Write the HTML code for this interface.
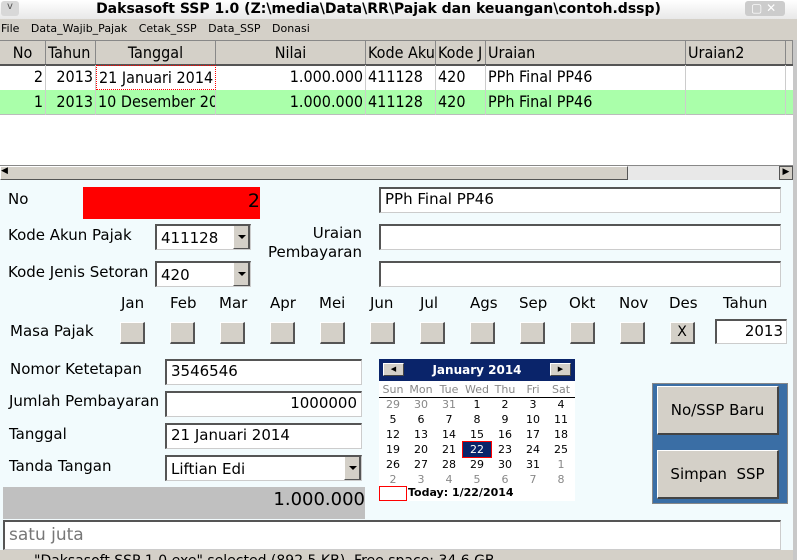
<!DOCTYPE html>
<html><head><style>
*{margin:0;padding:0;box-sizing:border-box}
body{width:797px;height:560px;overflow:hidden;background:#d4d0c8;font-family:"DejaVu Sans","Liberation Sans",sans-serif;position:relative}
.a{position:absolute}
.t{font-size:14px;color:#000;white-space:nowrap}
.inp{position:absolute;background:#fff;border-top:2px solid #555;border-left:2px solid #555;border-right:1px solid #ccc;border-bottom:1px solid #ccc;font-size:15px;padding-left:4px;line-height:20px;white-space:nowrap}
.mb{position:absolute;width:25px;height:22px;background:#d4d0c8;border-top:1px solid #fff;border-left:1px solid #fff;border-right:2px solid #555;border-bottom:2px solid #555;font-size:14px;text-align:center;line-height:19px}
.dd{position:absolute;right:0;top:0;width:17px;height:100%;background:#d4d0c8;border-left:1px solid #fff;border-right:2px solid #555;border-bottom:1px solid #555}
.dd:after{content:"";position:absolute;left:4px;top:9px;border:4px solid transparent;border-top:4px solid #000;border-bottom:0}
.gh{position:absolute;top:41px;height:24px;border-right:1px solid #888;font-size:16px;line-height:24px;background:#d4d0c8;white-space:nowrap;overflow:hidden;padding:0 2px;font-family:"DejaVu Sans Condensed","DejaVu Sans",sans-serif}
.gc{position:absolute;height:25px;border-right:1px solid #ccc;font-size:16px;line-height:24px;white-space:nowrap;overflow:hidden;padding:0 2px;font-family:"DejaVu Sans Condensed","DejaVu Sans",sans-serif}
.cal td{width:28px;height:15px;text-align:center;font-size:11px;padding:0}
.g{color:#888}
</style></head><body>
<div class="a" style="left:0;top:0;width:797px;height:19px;background:linear-gradient(#fff,#e8e8e8)"></div>
<div class="a" style="left:1px;top:1px;width:18px;height:15px;background:#d8d8d8;border-radius:3px;font-size:10px;color:#555;text-align:center">v</div>
<div class="a" style="left:0;top:0;width:797px;text-align:center;font-weight:bold;font-size:14px;line-height:18px;padding-right:40px">Daksasoft SSP 1.0 (Z:\media\Data\RR\Pajak dan keuangan\contoh.dssp)</div>
<div class="a" style="left:745px;top:1px;width:40px;height:15px;background:#ccc;border-radius:3px;color:#fff;font-size:12px;line-height:15px;padding-left:6px">▢ ✕</div>
<div class="a t" style="left:1px;top:22px;font-size:11px;word-spacing:8px">File Data_Wajib_Pajak Cetak_SSP Data_SSP Donasi</div>
<div class="a" style="left:0;top:40px;width:793px;height:126px;background:#fff;border-top:1px solid #888"></div>
<div class="gh" style="left:0;width:46px;text-align:center">No</div>
<div class="gh" style="left:46px;width:50px">Tahun</div>
<div class="gh" style="left:96px;width:120px;text-align:center">Tanggal</div>
<div class="gh" style="left:216px;width:150px;text-align:center">Nilai</div>
<div class="gh" style="left:366px;width:70px">Kode Aku</div>
<div class="gh" style="left:436px;width:50px">Kode J</div>
<div class="gh" style="left:486px;width:200px">Uraian</div>
<div class="gh" style="left:686px;width:100px">Uraian2</div>
<div class="gh" style="left:786px;width:7px"></div>
<div class="a" style="left:0;top:64px;width:793px;height:2px;background:#555"></div>
<div class="a" style="left:0;top:90px;width:793px;height:25px;background:#aaffaa;border-bottom:1px solid #bbb"></div>
<div class="gc" style="left:0;top:65px;width:46px;text-align:right">2</div>
<div class="gc" style="left:46px;top:65px;width:50px;text-align:right">2013</div>
<div class="gc" style="left:96px;top:65px;width:120px;border:1px dotted red">21 Januari 2014</div>
<div class="gc" style="left:216px;top:65px;width:150px;text-align:right">1.000.000</div>
<div class="gc" style="left:366px;top:65px;width:70px">411128</div>
<div class="gc" style="left:436px;top:65px;width:50px">420</div>
<div class="gc" style="left:486px;top:65px;width:200px">PPh Final PP46</div>
<div class="gc" style="left:686px;top:65px;width:100px"></div>
<div class="gc" style="left:0;top:90px;width:46px;text-align:right">1</div>
<div class="gc" style="left:46px;top:90px;width:50px;text-align:right">2013</div>
<div class="gc" style="left:96px;top:90px;width:120px">10 Desember 2013</div>
<div class="gc" style="left:216px;top:90px;width:150px;text-align:right">1.000.000</div>
<div class="gc" style="left:366px;top:90px;width:70px">411128</div>
<div class="gc" style="left:436px;top:90px;width:50px">420</div>
<div class="gc" style="left:486px;top:90px;width:200px">PPh Final PP46</div>
<div class="gc" style="left:686px;top:90px;width:100px"></div>
<div class="a" style="left:0;top:165px;width:793px;height:15px;background:#e8e8e8;border-top:1px solid #888"></div>
<div class="a" style="left:0;top:166px;width:628px;height:14px;background:#d4d0c8;border:1px solid #fff;border-right-color:#555;border-bottom-color:#555"></div>
<div class="a" style="left:1px;top:166px;font-size:9px">◀</div>
<div class="a" style="left:779px;top:166px;width:14px;height:14px;background:#d4d0c8;border:1px solid #555;font-size:9px;text-align:center">▶</div>
<div class="a" style="left:0;top:180px;width:793px;height:370px;background:#f2fbfd"></div>
<div class="a t" style="left:8px;top:190px;font-size:15px">No</div>
<div class="a" style="left:83px;top:187px;width:177px;height:32px;background:#f00;font-size:19px;text-align:right;line-height:28px">2</div>
<div class="inp" style="left:379px;top:187px;width:402px;height:26px">PPh Final PP46</div>
<div class="a t" style="left:8px;top:226px;font-size:15px">Kode Akun Pajak</div>
<div class="inp" style="left:155px;top:224px;width:96px;height:26px;line-height:24px">411128<div class="dd"></div></div>
<div class="a t" style="left:262px;top:224px;width:100px;font-size:15px;text-align:right;line-height:19px">Uraian<br>Pembayaran</div>
<div class="inp" style="left:379px;top:224px;width:402px;height:26px"></div>
<div class="a t" style="left:8px;top:263px;font-size:15px">Kode Jenis Setoran</div>
<div class="inp" style="left:155px;top:261px;width:96px;height:26px;line-height:24px">420<div class="dd"></div></div>
<div class="inp" style="left:379px;top:261px;width:402px;height:26px"></div>
<div class="a t" style="left:10px;top:322px;font-size:15px">Masa Pajak</div>
<div class="a t" style="left:121px;top:294px;font-size:15px">Jan</div><div class="mb" style="left:120px;top:322px"></div>
<div class="a t" style="left:170px;top:294px;font-size:15px">Feb</div><div class="mb" style="left:170px;top:322px"></div>
<div class="a t" style="left:219px;top:294px;font-size:15px">Mar</div><div class="mb" style="left:220px;top:322px"></div>
<div class="a t" style="left:270px;top:294px;font-size:15px">Apr</div><div class="mb" style="left:270px;top:322px"></div>
<div class="a t" style="left:319px;top:294px;font-size:15px">Mei</div><div class="mb" style="left:320px;top:322px"></div>
<div class="a t" style="left:370px;top:294px;font-size:15px">Jun</div><div class="mb" style="left:370px;top:322px"></div>
<div class="a t" style="left:420px;top:294px;font-size:15px">Jul</div><div class="mb" style="left:420px;top:322px"></div>
<div class="a t" style="left:470px;top:294px;font-size:15px">Ags</div><div class="mb" style="left:470px;top:322px"></div>
<div class="a t" style="left:519px;top:294px;font-size:15px">Sep</div><div class="mb" style="left:520px;top:322px"></div>
<div class="a t" style="left:569px;top:294px;font-size:15px">Okt</div><div class="mb" style="left:570px;top:322px"></div>
<div class="a t" style="left:619px;top:294px;font-size:15px">Nov</div><div class="mb" style="left:620px;top:322px"></div>
<div class="a t" style="left:669px;top:294px;font-size:15px">Des</div><div class="mb" style="left:670px;top:322px">X</div>
<div class="a t" style="left:723px;top:294px;font-size:15px">Tahun</div>
<div class="inp" style="left:715px;top:319px;width:72px;height:25px;text-align:right;padding-right:3px">2013</div>
<div class="a t" style="left:10px;top:360px;font-size:15px">Nomor Ketetapan</div>
<div class="inp" style="left:165px;top:359px;width:197px;height:26px">3546546</div>
<div class="a t" style="left:9px;top:392px;font-size:15px">Jumlah Pembayaran</div>
<div class="inp" style="left:165px;top:391px;width:197px;height:26px;text-align:right;padding-right:4px">1000000</div>
<div class="a t" style="left:9px;top:425px;font-size:15px">Tanggal</div>
<div class="inp" style="left:165px;top:423px;width:197px;height:26px">21 Januari 2014</div>
<div class="a t" style="left:9px;top:457px;font-size:15px">Tanda Tangan</div>
<div class="inp" style="left:165px;top:455px;width:197px;height:26px;line-height:24px">Liftian Edi<div class="dd"></div></div>
<div class="a" style="left:3px;top:487px;width:362px;height:32px;background:#c0c0c0;font-size:18px;text-align:right;line-height:26px;color:#000">1.000.000</div>
<div class="inp" style="left:3px;top:520px;width:778px;height:30px;color:#777;font-size:17px;line-height:27px">satu juta</div>
<div class="a" style="left:379px;top:359px;width:196px;height:142px;background:#fff"></div>
<div class="a" style="left:379px;top:359px;width:196px;height:22px;background:#0a246a;color:#fff;font-weight:bold;font-size:12px;text-align:center;line-height:22px">January 2014</div>
<div class="a" style="left:383px;top:363px;width:21px;height:13px;background:#d4d0c8;border:1px solid #fff;border-right-color:#444;border-bottom-color:#444;font-size:7px;text-align:center;line-height:11px">◀</div>
<div class="a" style="left:550px;top:363px;width:21px;height:13px;background:#d4d0c8;border:1px solid #fff;border-right-color:#444;border-bottom-color:#444;font-size:7px;text-align:center;line-height:11px">▶</div>
<table class="a cal" style="left:379px;top:382px;border-collapse:collapse">
<tr class="g" style="border-bottom:1px solid #000"><td>Sun</td><td>Mon</td><td>Tue</td><td>Wed</td><td>Thu</td><td>Fri</td><td>Sat</td></tr>
<tr><td class="g">29</td><td class="g">30</td><td class="g">31</td><td>1</td><td>2</td><td>3</td><td>4</td></tr>
<tr><td>5</td><td>6</td><td>7</td><td>8</td><td>9</td><td>10</td><td>11</td></tr>
<tr><td>12</td><td>13</td><td>14</td><td>15</td><td>16</td><td>17</td><td>18</td></tr>
<tr><td>19</td><td>20</td><td>21</td><td style="background:#0a246a;color:#fff;outline:1px solid red">22</td><td>23</td><td>24</td><td>25</td></tr>
<tr><td>26</td><td>27</td><td>28</td><td>29</td><td>30</td><td>31</td><td class="g">1</td></tr>
<tr class="g"><td>2</td><td>3</td><td>4</td><td>5</td><td>6</td><td>7</td><td>8</td></tr>
</table>
<div class="a" style="left:379px;top:486px;width:28px;height:15px;border:1px solid red"></div>
<div class="a" style="left:408px;top:486px;font-size:11px;font-weight:bold">Today: 1/22/2014</div>
<div class="a" style="left:652px;top:383px;width:136px;height:121px;background:#3a6ea5;border:1px solid #888"></div>
<div class="a" style="left:657px;top:386px;width:122px;height:49px;background:#d4d0c8;border:1px solid #fff;border-right:2px solid #444;border-bottom:2px solid #444;font-size:15px;text-align:center;line-height:46px">No/SSP Baru</div>
<div class="a" style="left:657px;top:450px;width:122px;height:49px;background:#d4d0c8;border:1px solid #fff;border-right:2px solid #444;border-bottom:2px solid #444;font-size:15px;text-align:center;line-height:46px">Simpan&nbsp; SSP</div>
<div class="a" style="left:793px;top:40px;width:4px;height:520px;background:#c8c8c8"></div>
<div class="a" style="left:0;top:550px;width:793px;height:10px;background:#d4d0c8;font-size:14px;line-height:22px;padding-left:34px;overflow:hidden">"Daksasoft SSP 1.0.exe" selected (892.5 KB), Free space: 34.6 GB</div>
</body></html>
